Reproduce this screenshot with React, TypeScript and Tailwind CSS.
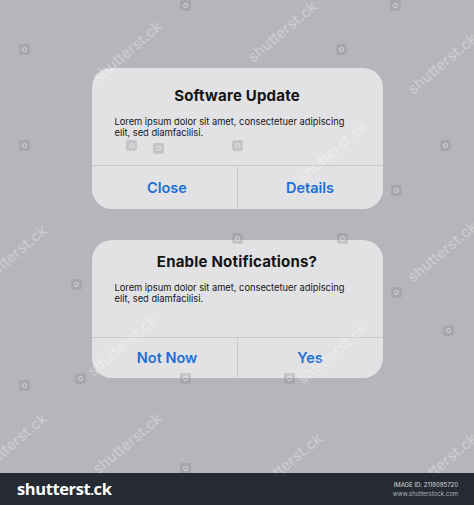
import React from "react";

type Mark = { x: number; y: number };

const textMarks: Mark[] = [
  { x: 95, y: 28 },
  { x: 250, y: 8 },
  { x: 410, y: 40 },
  { x: -20, y: 232 },
  { x: 410, y: 228 },
  { x: 90, y: 322 },
  { x: 300, y: 330 },
  { x: 95, y: 420 },
  { x: 255, y: 440 },
  { x: 300, y: 128 },
  { x: 410, y: 440 },
  { x: -20, y: 420 },
];

const squareMarks: Mark[] = [
  { x: 19, y: 44 },
  { x: 180, y: 0 },
  { x: 390, y: 0 },
  { x: 336, y: 44 },
  { x: 19, y: 140 },
  { x: 232, y: 140 },
  { x: 126, y: 140 },
  { x: 153, y: 143 },
  { x: 391, y: 185 },
  { x: 71, y: 279 },
  { x: 391, y: 287 },
  { x: 232, y: 233 },
  { x: 337, y: 233 },
  { x: 180, y: 373 },
  { x: 75, y: 373 },
  { x: 284, y: 373 },
  { x: 19, y: 380 },
  { x: 443, y: 325 },
  { x: 180, y: 463 },
  { x: 440, y: 140 },
];

function Dialog({
  title,
  left,
  right,
  top,
  buttons,
}: {
  title: string;
  left: string;
  right: string;
  top: string;
  buttons: string;
}) {
  return (
    <div className="w-[291px] rounded-[20px] bg-[#e2e2e4] overflow-hidden flex flex-col">
      <div className={`h-[97px] flex flex-col items-center px-[23px] ${top}`}>
        <div className="text-[15px] font-bold text-[#141414] leading-[18px] tracking-[0.2px]">
          {title}
        </div>
        <p className="mt-[11px] text-[9.3px] leading-[11px] text-[#151515] self-stretch">
          Lorem ipsum dolor sit amet, consectetuer adipiscing elit, sed diamfacilisi.
        </p>
      </div>
      <div className="h-px bg-[#c9c9cb]" />
      <div className={`grid grid-cols-[1fr_1px_1fr] ${buttons}`}>
        <div className="flex items-center justify-center text-[14.5px] font-semibold text-[#1c6fd6]">
          <span className="translate-x-[3px]">{left}</span>
        </div>
        <div className="bg-[#c9c9cb]" />
        <div className="flex items-center justify-center text-[14.5px] font-semibold text-[#1c6fd6]">
          {right}
        </div>
      </div>
    </div>
  );
}

export default function App() {
  return (
    <div
      className="w-[474px] h-[505px] flex flex-col overflow-hidden"
      style={{ fontFamily: "Inter, 'Noto Sans', sans-serif" }}
    >
      <div className="relative h-[473px] bg-[#b5b6ba] flex flex-col items-center pt-[68px] gap-[31px] overflow-hidden">
        <Dialog
          title="Software Update"
          left="Close"
          right="Details"
          top="pt-[19px]"
          buttons="h-[43px]"
        />
        <Dialog
          title="Enable Notifications?"
          left="Not Now"
          right="Yes"
          top="pt-[13px]"
          buttons="h-[40px]"
        />

        {/* stock watermark overlay */}
        {textMarks.map((m, i) => (
          <div
            key={`t${i}`}
            className="absolute text-[15px] font-medium text-white/30 -rotate-[40deg] origin-left whitespace-nowrap pointer-events-none"
            style={{ left: m.x, top: m.y + 40 }}
          >
            shutterst.ck
          </div>
        ))}
        {squareMarks.map((m, i) => (
          <div
            key={`s${i}`}
            className="absolute w-[11px] h-[11px] rounded-[2px] bg-[#8e8f93]/35 flex items-center justify-center pointer-events-none"
            style={{ left: m.x, top: m.y }}
          >
            <div className="w-[5px] h-[5px] rounded-full border border-white/50" />
          </div>
        ))}
      </div>

      <div className="h-[32px] bg-[#252a33] flex items-center justify-between pl-[17px] pr-[16px]">
        <div
          className="text-white text-[16.5px] font-bold tracking-[-0.4px] leading-none"
          style={{ fontFamily: "'Open Sans', sans-serif" }}
        >
          shutterst<span className="text-[13px]">.</span>ck
        </div>
        <div className="flex flex-col items-end gap-[2px] text-[6px] leading-[7px] text-[#d7d9dc]">
          <div>IMAGE ID: 2118095720</div>
          <div className="text-[#aeb2b8]">www.shutterstock.com</div>
        </div>
      </div>
    </div>
  );
}
